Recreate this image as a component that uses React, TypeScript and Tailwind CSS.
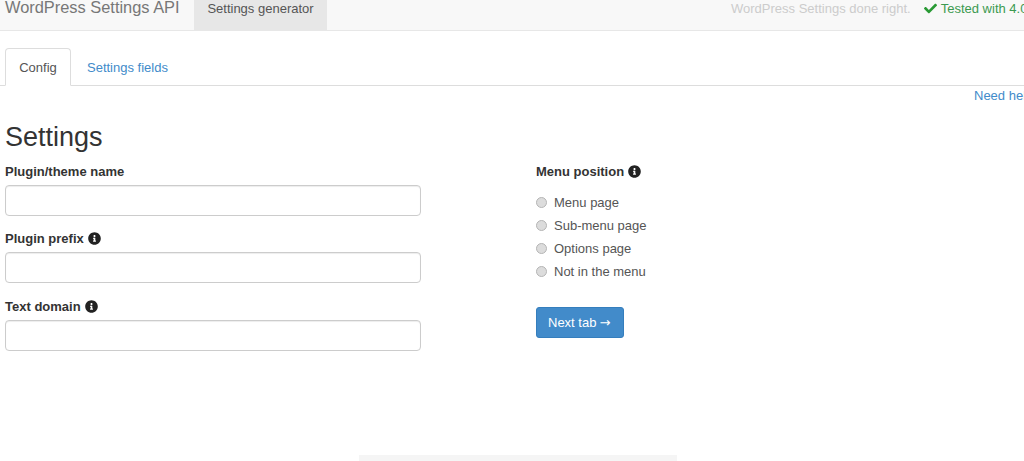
import { FaCheck, FaInfoCircle } from "react-icons/fa";

const font = "font-['Liberation_Sans',Arial,sans-serif]";

function Field({ label, info }: { label: string; info?: boolean }) {
  return (
    <div className="flex flex-col">
      <label className="flex h-[19px] items-center gap-[4px] text-[13px] leading-[19px] font-bold text-[#333]">
        {label}
        {info && <FaInfoCircle className="text-[13px] text-[#222]" />}
      </label>
      <input
        type="text"
        className="mt-[4px] h-[31px] w-[416px] rounded-[4px] border border-[#ccc] bg-white shadow-[inset_0_1px_1px_rgba(0,0,0,0.075)]"
      />
    </div>
  );
}

function Radio({ label }: { label: string }) {
  return (
    <label className="flex h-[23px] items-center gap-[7px] text-[13px] text-[#555]">
      <input
        type="radio"
        name="menu"
        className="h-[11px] w-[11px] appearance-none rounded-full border border-[#b5b5b5] bg-[#dcdcdc]"
      />
      {label}
    </label>
  );
}

export default function App() {
  return (
    <div className={`${font} h-[461px] w-[1024px] overflow-hidden bg-white text-[13px] text-[#333]`}>
      <nav className="flex h-[31px] items-start border-b border-[#e7e7e7] bg-[#f8f8f8] whitespace-nowrap">
        <div className="ml-[5px] w-[189px] shrink-0 text-[16.4px] leading-[15px] text-[#777]">WordPress Settings API</div>
        <div className="flex h-[30px] w-[133px] shrink-0 justify-center bg-[#e7e7e7] pt-[1px] text-[13px] leading-[15px] text-[#555]">
          Settings generator
        </div>
        <div className="ml-[404px] shrink-0 pt-[1px] text-[13px] leading-[15px] text-[#ccc]">WordPress Settings done right.</div>
        <div className="ml-[13px] flex shrink-0 items-center gap-[4px] pt-[1px] text-[13px] leading-[15px] text-[#3c9a50]">
          <FaCheck className="text-[13px] text-[#2a9a35]" />
          Tested with 4.0
        </div>
      </nav>

      <div className="mt-[17px] flex h-[38px] border-b border-[#ddd] pl-[5px] text-[13px]">
        <div className="flex h-[38px] w-[66px] items-center justify-center rounded-t-[4px] border border-[#ddd] border-b-white bg-white pt-[1px] text-[#555]">
          Config
        </div>
        <div className="flex h-[37px] items-center pt-[2px] pl-[16px] text-[#428bca]">Settings fields</div>
      </div>

      <div className="flex h-[19px] justify-start pl-[974px] text-[13px] leading-[19px] whitespace-nowrap text-[#428bca]">
        Need help?
      </div>

      <h1 className="mt-[15px] ml-[5px] h-[34px] text-[27px] leading-[34px] font-normal text-[#333]">Settings</h1>

      <div className="mt-[8px] flex pl-[5px]">
        <div className="flex w-[531px] flex-col gap-[13.4px]">
          <Field label="Plugin/theme name" />
          <Field label="Plugin prefix" info />
          <Field label="Text domain" info />
        </div>
        <div className="flex flex-col">
          <label className="flex h-[19px] items-center gap-[4px] text-[13px] font-bold text-[#333]">
            Menu position
            <FaInfoCircle className="text-[13px] text-[#222]" />
          </label>
          <div className="mt-[10px] flex flex-col">
            <Radio label="Menu page" />
            <Radio label="Sub-menu page" />
            <Radio label="Options page" />
            <Radio label="Not in the menu" />
          </div>
          <button
            type="button"
            className="mt-[24px] flex h-[31px] w-[88px] items-center gap-[3px] rounded-[3px] border border-[#357ebd] bg-[#428bca] pl-[11px] text-[13px] text-white"
          >
            Next tab <span className="font-['DejaVu_Sans',sans-serif] text-[13px] leading-none">→</span>
          </button>
        </div>
      </div>

      <div className="mt-[104.2px] ml-[359px] h-[6px] w-[318px] bg-[#f5f5f5]" />
    </div>
  );
}
